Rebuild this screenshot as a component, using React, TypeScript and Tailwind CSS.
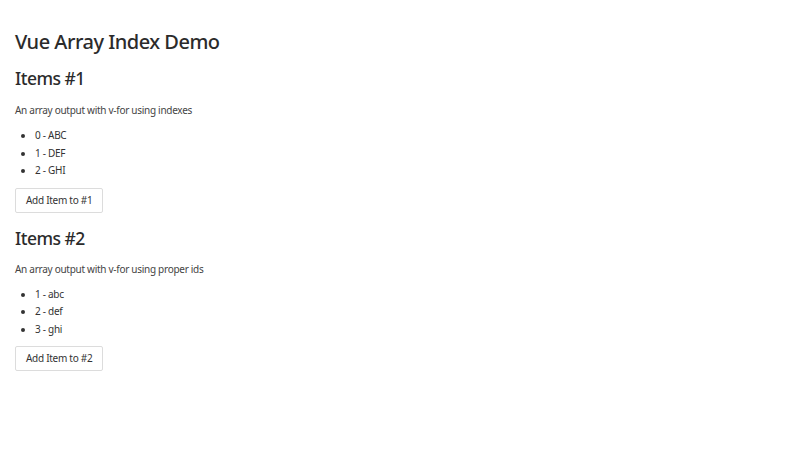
import React from "react";

function Section({ title, desc, items, btn, first }: { title: string; desc: string; items: string[]; btn: string; first?: boolean }) {
  return (
    <div className={first ? "mt-[10px]" : "mt-[13px]"}>
      <h2 className="text-[17.5px] leading-[24px] font-medium tracking-[-0.5px] text-[#2b2b2b]">{title}</h2>
      <p className={`${first ? "mt-[12px]" : "mt-[11px]"} text-[10px] leading-[16px] tracking-[-0.28px] text-[#444]`}>{desc}</p>
      <ul className="mt-[9px] list-disc pl-[20px] text-[10px] leading-[17.5px] tracking-[-0.28px] text-[#333]">
        {items.map((i) => (
          <li key={i}>{i}</li>
        ))}
      </ul>
      <button className="mt-[8px] h-[25px] px-[10px] border border-[#dcdcdc] rounded-[2px] bg-white text-[10px] tracking-[-0.28px] text-[#333]">
        {btn}
      </button>
    </div>
  );
}

export default function App() {
  return (
    <div className="w-[800px] h-[450px] bg-white pt-[28px] px-[15px]" style={{ fontFamily: '"Noto Sans", sans-serif' }}>
      <h1 className="text-[20px] leading-[28px] font-medium tracking-[-0.5px] text-[#2b2b2b]">Vue Array Index Demo</h1>
      <Section first title="Items #1" desc="An array output with v-for using indexes" items={["0 - ABC", "1 - DEF", "2 - GHI"]} btn="Add Item to #1" />
      <Section title="Items #2" desc="An array output with v-for using proper ids" items={["1 - abc", "2 - def", "3 - ghi"]} btn="Add Item to #2" />
    </div>
  );
}
